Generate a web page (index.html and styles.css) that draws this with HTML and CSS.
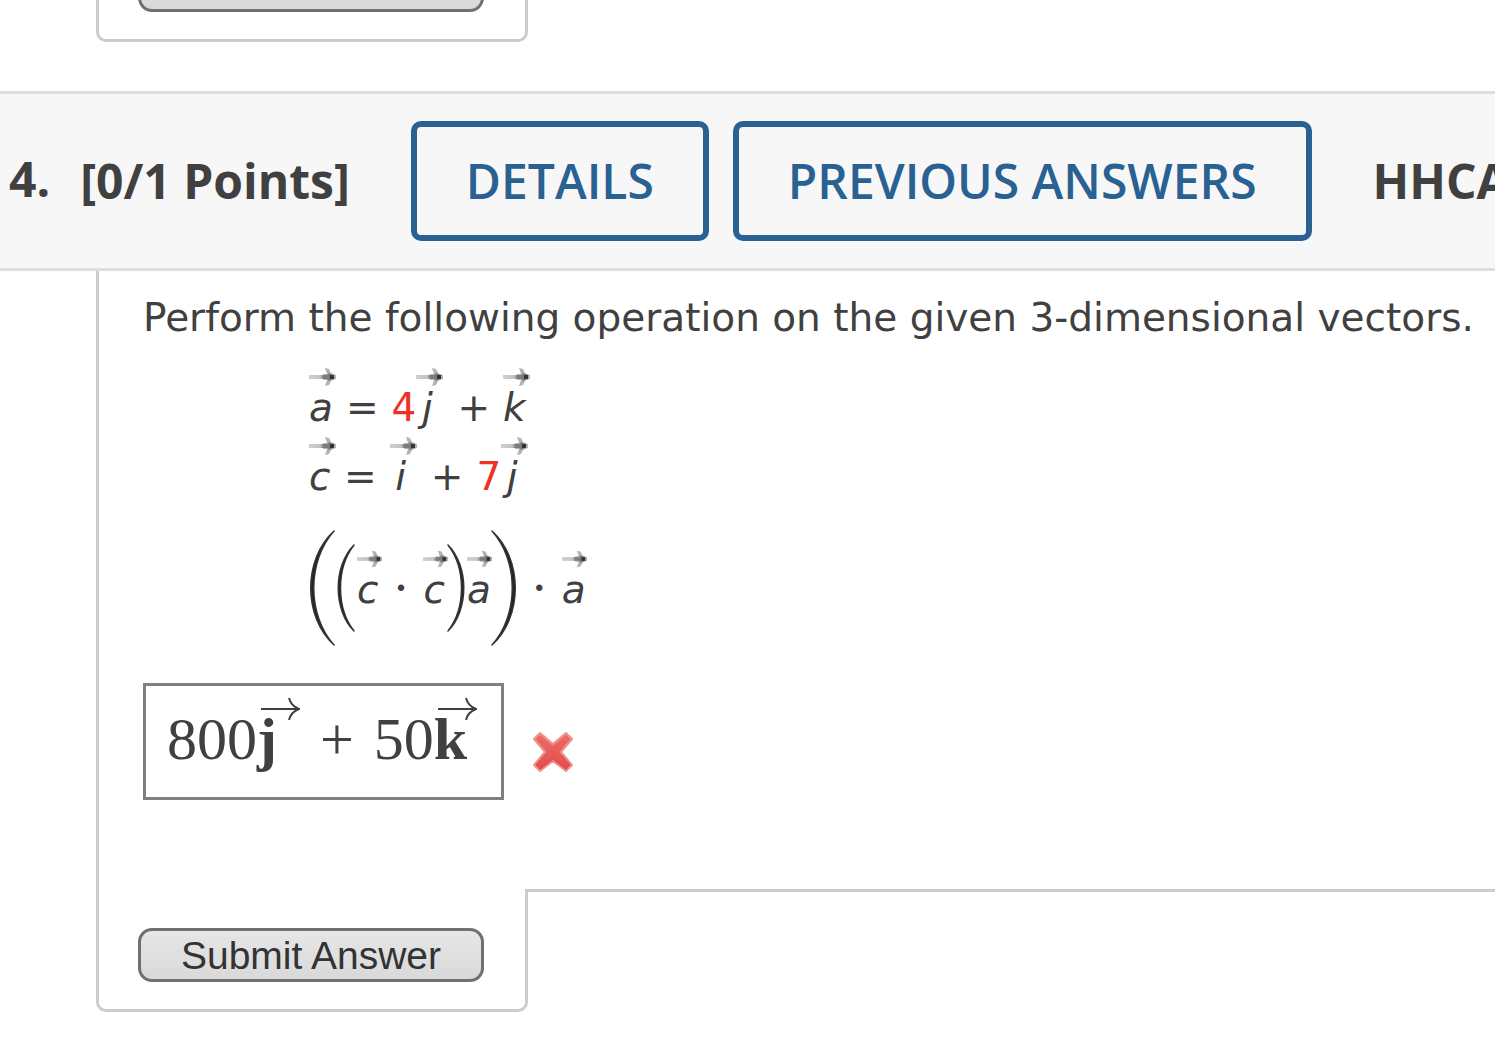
FILE: index.html
```html
<!DOCTYPE html>
<html lang="en">
  <head>
    <meta charset="UTF-8" />
    <meta name="viewport" content="width=device-width, initial-scale=1.0" />
    <title>Question 4</title>
    <link rel="stylesheet" href="styles.css">
  </head>
  <body>
    <!-- shared shapes -->
    <svg class="defs" aria-hidden="true">
      <defs>
        <linearGradient id="shaft">
          <stop offset="0" stop-color="#cfcfcf" />
          <stop offset="0.45" stop-color="#c4c4c4" />
          <stop offset="0.55" stop-color="#888" />
          <stop offset="1" stop-color="#666" />
        </linearGradient>
        <linearGradient id="cross" x1="0" y1="0" x2="0" y2="1">
          <stop offset="0" stop-color="#f08580" />
          <stop offset="1" stop-color="#dc3b38" />
        </linearGradient>
      </defs>
      <symbol id="arrow" viewBox="0 0 28 18">
        <rect x="0" y="7" width="25" height="4" fill="url(#shaft)" />
        <path d="M16 0 L20 1 L22 5 L27 7 V11 L22 13 L20 17 L16 18 L18 12 H14 V6 H18 Z" fill="#b4b4b4" />
        <path d="M14 7 H18 L20 5 L24 7 V11 L20 13 L18 11 H14 Z" fill="#7c7c7c" />
        <rect x="21" y="7" width="4" height="4" fill="#333" />
      </symbol>
      <symbol id="long-arrow" viewBox="0 0 40 24">
        <path d="M1 12 H39" fill="none" stroke="#404040" stroke-width="2" />
        <path d="M29 1 Q31 9 39 12 Q31 15 29 23" fill="none" stroke="#404040" stroke-width="2" />
      </symbol>
      <symbol id="paren-big" viewBox="0 0 26 116">
        <path d="M25 1 C-6 29 -6 87 25 115 C-2 85 -2 31 25 1 Z" fill="#222" stroke="#333" stroke-width="1.5" stroke-linejoin="round" />
      </symbol>
      <symbol id="paren-small" viewBox="0 0 18 88">
        <path d="M17 1 C-4 22 -4 66 17 87 C-1 64 -1 24 17 1 Z" fill="#222" stroke="#333" stroke-width="1.5" stroke-linejoin="round" />
      </symbol>
    </svg>

    <section class="question previous">
      <div class="question-footer">
        <div class="submit-tab">
          <button type="button" class="submit" aria-label="Submit Answer"></button>
        </div>
      </div>
    </section>

    <section class="question">
      <header class="question-header">
        <span class="number">4.</span>
        <span class="points">[0/1 Points]</span>
        <div class="actions">
          <button type="button" class="action">DETAILS</button>
          <button type="button" class="action">PREVIOUS ANSWERS</button>
        </div>
        <span class="source">HHCA</span>
      </header>

      <div class="question-body">
        <p class="prompt">Perform the following operation on the given 3-dimensional vectors.</p>

        <div class="equations">
          <div class="equation">
            <span class="vec"><svg><use href="#arrow" /></svg><i>a</i></span>
            <span>=</span>
            <span class="term"><span class="value">4</span><span class="vec unit"><svg><use href="#arrow" /></svg><i>j</i></span></span>
            <span>+</span>
            <span class="vec"><svg><use href="#arrow" /></svg><i>k</i></span>
          </div>
          <div class="equation">
            <span class="vec"><svg><use href="#arrow" /></svg><i>c</i></span>
            <span>=</span>
            <span class="vec unit"><svg><use href="#arrow" /></svg><i>i</i></span>
            <span>+</span>
            <span class="term"><span class="value">7</span><span class="vec unit"><svg><use href="#arrow" /></svg><i>j</i></span></span>
          </div>
        </div>

        <div class="expression">
          <svg class="paren big" role="img" aria-label="("><use href="#paren-big" /></svg>
          <svg class="paren small" role="img" aria-label="("><use href="#paren-small" /></svg>
          <span class="vec"><svg><use href="#arrow" /></svg><i>c</i></span>
          <span class="dot">·</span>
          <span class="vec"><svg><use href="#arrow" /></svg><i>c</i></span>
          <svg class="paren small close" role="img" aria-label=")"><use href="#paren-small" /></svg>
          <span class="vec"><svg><use href="#arrow" /></svg><i>a</i></span>
          <svg class="paren big close" role="img" aria-label=")"><use href="#paren-big" /></svg>
          <span class="dot">·</span>
          <span class="vec"><svg><use href="#arrow" /></svg><i>a</i></span>
        </div>

        <div class="answer">
          <div class="answer-box">
            <span class="math-term">800<span class="math-vec"><svg><use href="#long-arrow" /></svg><b>j</b></span></span>
            <span>+</span>
            <span class="math-term">50<span class="math-vec"><svg><use href="#long-arrow" /></svg><b>k</b></span></span>
          </div>
          <svg class="wrong" viewBox="0 0 42 42" role="img" aria-label="Incorrect">
            <path d="M8 2 L21 13 L34 2 L40 8 L29 21 L40 34 L34 40 L21 30 L8 40 L2 34 L13 21 L2 8 Z" fill="url(#cross)" stroke="#f0918c" stroke-width="2" stroke-linejoin="round" />
            <path d="M8 8 L34 34 M34 8 L8 34" stroke="#ec5a56" stroke-width="6" stroke-linecap="round" opacity="0.6" />
          </svg>
        </div>
      </div>

      <div class="question-footer">
        <div class="submit-tab">
          <button type="button" class="submit">Submit Answer</button>
        </div>
        <div class="rule"></div>
      </div>
    </section>
  </body>
</html>
```

FILE: styles.css
```css
* {
  box-sizing: border-box;
}
body {
  margin: 0;
  overflow: hidden;
  background-color: #fff;
  color: #404040;
  font-family: Verdana, "DejaVu Sans", sans-serif;
  font-size: 39px;
  line-height: 48px;
}
svg {
  display: block;
  flex: none;
}
.defs {
  position: absolute;
  width: 0;
  height: 0;
}

/* the end of the question above, scrolled partly out of view */
.previous {
  margin-top: -81px;
  margin-bottom: 49px;
}

.question-header {
  display: flex;
  align-items: center;
  height: 180px;
  padding-left: 9px;
  border-top: 3px solid #dedede;
  border-bottom: 3px solid #dedede;
  background-color: #f7f7f7;
  font-family: "Open Sans", sans-serif;
  font-size: 48px;
  font-weight: 700;
  white-space: nowrap;
  overflow: hidden;
}
.number {
  padding-bottom: 4px;
  margin-right: 30px;
}
.actions {
  display: flex;
  gap: 24px;
  margin: 0 61px;
}
.action {
  height: 120px;
  padding: 0 49px;
  border: 6px solid #286192;
  border-radius: 10px;
  background: none;
  color: #286192;
  font: inherit;
  font-weight: 600;
}

.question-body {
  margin-left: 96px;
  padding: 23px 0 89px 44px;
  border-left: 3px solid #ccc;
}
.prompt {
  margin: 0;
  white-space: nowrap;
}
.equations {
  margin: 21px 0 0 166px;
}
.equation {
  display: flex;
  align-items: flex-end;
  gap: 13px;
  height: 69px;
}
.term {
  display: flex;
  align-items: flex-end;
}
.value {
  color: #ee3124;
}
.vec {
  display: flex;
  flex-direction: column;
  align-items: flex-start;
}
.vec svg {
  width: 28px;
  height: 18px;
  margin-right: -6px;
  margin-bottom: -2px;
}
.vec.unit {
  align-items: center;
}
.vec.unit svg {
  margin-right: 0;
}
.vec.unit i {
  padding-right: 6px;
}

.expression {
  display: flex;
  align-items: center;
  height: 120px;
  margin: 27px 0 0 166px;
}
.expression .vec {
  padding-bottom: 12px;
}
.expression .vec svg {
  width: 26px;
}
.paren.big {
  width: 26px;
  height: 116px;
}
.paren.small {
  width: 18px;
  height: 88px;
  margin: 0 2px;
}
.close {
  transform: scaleX(-1);
}
.dot {
  padding: 0 16px;
  font-family: "Liberation Serif", serif;
  font-weight: 700;
}

.answer {
  display: flex;
  align-items: center;
  gap: 28px;
  margin-top: 35px;
}
.answer-box {
  display: flex;
  align-items: flex-end;
  gap: 20px;
  height: 117px;
  padding: 0 24px 28px 21px;
  border: 3px solid #808080;
  font-family: "Liberation Serif", serif;
  font-size: 60px;
  line-height: 60px;
}
.math-term {
  display: flex;
  align-items: flex-end;
}
.math-vec {
  display: flex;
  flex-direction: column;
}
.math-vec svg {
  width: 40px;
  height: 24px;
  margin-left: 3px;
  margin-bottom: -12px;
}
.wrong {
  width: 42px;
  height: 42px;
  margin-top: 20px;
}

.question-footer {
  display: flex;
  margin-left: 96px;
}
.submit-tab {
  padding: 39px 41px 27px 39px;
  border: 3px solid #ccc;
  border-top: 0;
  border-radius: 0 0 10px 10px;
}
.submit {
  display: block;
  height: 54px;
  width: 346px;
  border: 3px solid #707070;
  border-radius: 14px;
  background: linear-gradient(#e6e6e6, #d9d9d9);
  color: #333;
  font-family: "Liberation Sans", Arial, sans-serif;
  font-size: 39px;
  line-height: 48px;
}
.rule {
  flex: 1;
  border-top: 3px solid #ccc;
}
```
